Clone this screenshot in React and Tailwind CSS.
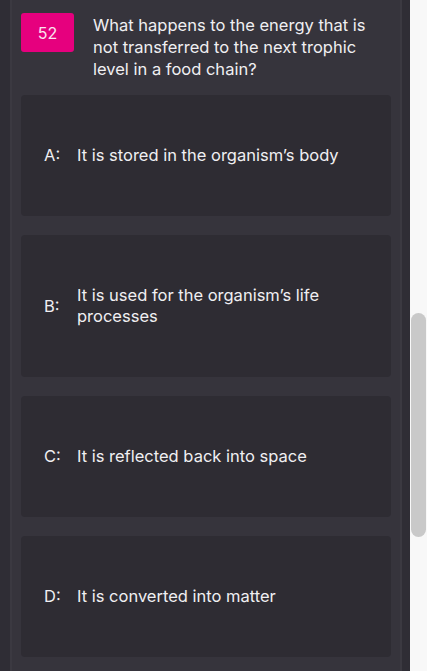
export default function App() {
  const options = [
    { k: "A:", t: "It is stored in the organism’s body" },
    { k: "B:", t: "It is used for the organism’s life processes" },
    { k: "C:", t: "It is reflected back into space" },
    { k: "D:", t: "It is converted into matter" },
  ];
  return (
    <div
      className="w-[427px] h-[671px] overflow-hidden flex bg-[#2f2d35] text-white"
      style={{ fontFamily: "Inter, 'Noto Sans', sans-serif" }}
    >
      <div className="flex-1 flex pl-[10px] pr-[8px]">
        <div className="flex-1 bg-[#36343c] border-x-2 border-[#3b3941] px-[9px]">
          <div className="flex gap-[19px] pt-[13px] pb-[15px]">
            <div className="w-[53px] h-[39px] shrink-0 rounded-[3px] bg-[#e6007e] flex items-center justify-center text-[16px] text-[#fbe3f0]">
              52
            </div>
            <div className="pt-[1px] pr-[14px] text-[16.5px] leading-[22px] text-[#f0eff2]">
              What happens to the energy that is not transferred to the next trophic level in a food chain?
            </div>
          </div>
          <div className="flex flex-col gap-[19px]">
            {options.map((o) => (
              <div
                key={o.k}
                className="rounded-[4px] bg-[#2e2c33] flex items-center py-[50px] pl-[23px] pr-[40px] text-[16.5px] leading-[21px] text-[#f0eff2]"
              >
                <span className="w-[33px] shrink-0">{o.k}</span>
                <span>{o.t}</span>
              </div>
            ))}
          </div>
        </div>
      </div>
      <div className="w-[17px] bg-[#f8f8f8] flex flex-col pt-[313px] items-center">
        <div className="w-[15px] h-[224px] rounded-full bg-[#c9c9c9]" />
      </div>
    </div>
  );
}
